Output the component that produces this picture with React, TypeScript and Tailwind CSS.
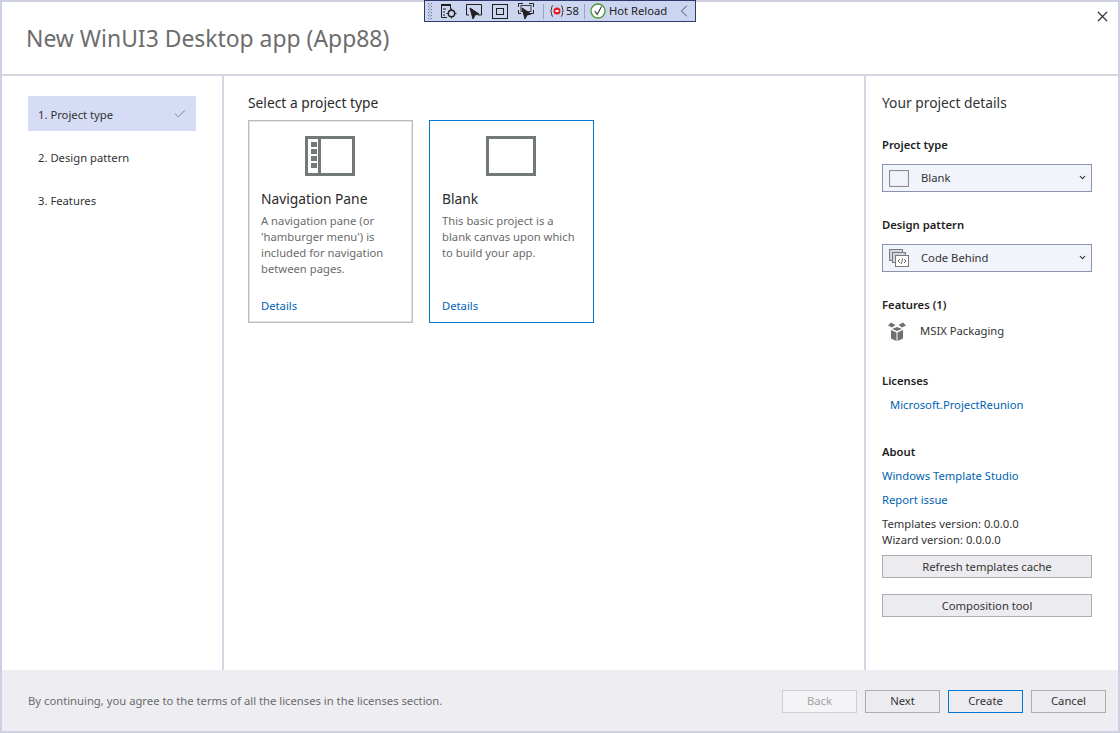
import { X, Check, ChevronDown, ChevronLeft } from 'lucide-react';

const font = "font-['Noto_Sans','Open_Sans',sans-serif]";
const link = 'text-[#0063b1]';

// Segoe-style step in the left rail
function Step({ label, active }: { label: string; active?: boolean }) {
  return (
    <div className={`flex h-[35px] items-center justify-between pl-[10px] pr-[9px] text-[11.25px] text-[#333] ${active ? 'bg-[#d6dcf5]' : ''}`}>
      <span className="pt-[4px]">{label}</span>
      {active && <Check size={14} strokeWidth={1.1} className="text-[#555]" />}
    </div>
  );
}

function Card({ title, lines, selected, children }: { title: string; lines: string[]; selected?: boolean; children: React.ReactNode }) {
  return (
    <div className={`flex h-[203px] w-[165px] flex-col border px-3 ${selected ? 'border-[#0078d4]' : 'border-[#bbbbbb] shadow-[inset_0_0_0_0.5px_#ccc]'}`}>
      <div className="mt-[15px] flex h-[40px] justify-center pr-px">{children}</div>
      <div className="mt-[12px] h-[22px] text-[13.8px] leading-[22px] text-[#2a2a2a]">{title}</div>
      <div className="mt-[3px] text-[11.25px] leading-[16px] text-[#6b6b6b]">
        {lines.map((l) => (
          <div key={l} className="whitespace-nowrap">{l}</div>
        ))}
      </div>
      <div className={`mt-auto mb-[8px] text-[11.25px] leading-[16px] ${link}`}>Details</div>
    </div>
  );
}

function NavIcon() {
  return (
    <svg width="50" height="40" viewBox="0 0 50 40">
      <rect x="1.5" y="1.5" width="47" height="37" fill="none" stroke="#737878" strokeWidth="3" />
      <rect x="13" y="2" width="3" height="36" fill="#737878" />
      <rect x="6" y="6" width="6" height="5" fill="#737878" />
      <rect x="6" y="13" width="6" height="5" fill="#737878" />
      <rect x="6" y="20" width="6" height="5" fill="#737878" />
      <rect x="6" y="27" width="6" height="5" fill="#737878" />
    </svg>
  );
}

function BlankIcon() {
  return (
    <svg width="50" height="40" viewBox="0 0 50 40">
      <rect x="1.5" y="1.5" width="47" height="37" fill="none" stroke="#737878" strokeWidth="3" />
    </svg>
  );
}

function Combo({ label, children }: { label: string; children: React.ReactNode }) {
  return (
    <div className="relative flex h-[28px] items-center border border-[#8a94ad] bg-[#f2f4fc] text-[11.25px] text-[#333]">
      <div className="flex w-[38px] justify-start pl-[6px]">{children}</div>
      <span className="pt-[1px]">{label}</span>
      <ChevronDown size={9} strokeWidth={3} className="absolute right-[4px] top-[8px] text-[#333]" />
    </div>
  );
}

function Heading({ children, className }: { children: React.ReactNode; className?: string }) {
  return <div className={`text-[11.25px] font-semibold leading-[16px] text-[#1e1e1e] ${className ?? ''}`}>{children}</div>;
}

function SideButton({ label, className }: { label: string; className?: string }) {
  return (
    <div className={`flex h-[23px] items-center justify-center border border-[#adadad] bg-[#ececf0] pt-[2px] text-[11.25px] text-[#333] ${className ?? ''}`}>
      {label}
    </div>
  );
}

function FootButton({ label, kind }: { label: string; kind?: 'off' | 'primary' }) {
  const look =
    kind === 'off' ? 'border-[#ccced8] bg-[#f4f4f6] text-[#a2a2a2]' : kind === 'primary' ? 'border-[#0078d4] bg-[#ececf0] text-[#333]' : 'border-[#adadad] bg-[#ececf0] text-[#333]';
  return <div className={`flex h-[23px] w-[75px] items-center justify-center border text-[11.25px] ${look}`}>{label}</div>;
}

// Visual Studio in-app debug toolbar
function DebugBar() {
  return (
    <div className="absolute -top-[2px] left-[422px] flex h-[22px] w-[272px] items-center border border-[#2e3a6e] bg-[#ccd5f0] text-[11.25px] text-[#222]">
      <svg width="7" height="18" viewBox="0 0 7 18" className="ml-[2px] shrink-0">
        {[1, 4, 7, 10, 13, 16].map((y) => (
          <g key={y} fill="#6d7590">
            <rect x="1" y={y} width="1" height="1" />
            <rect x="4" y={y} width="1" height="1" />
            <rect x="2.5" y={y + 1.5} width="1" height="1" />
          </g>
        ))}
      </svg>
      <svg width="18" height="18" viewBox="0 0 18 18" className="ml-[6px] shrink-0" fill="none" stroke="#1f1f1f">
        <path d="M1.5 15.5V2.5h9v5" />
        <rect x="1" y="2" width="10" height="2" fill="#1f1f1f" stroke="none" />
        <path d="M3 7h3M3 10h2M3 13h2M1.5 15.5H7" />
        <circle cx="11.5" cy="11.5" r="3.2" strokeWidth="1.4" />
        <path d="M11.5 6.5v2M11.5 14.5v2M6.5 11.5h2M14.5 11.5h2" />
      </svg>
      <svg width="18" height="18" viewBox="0 0 18 18" className="ml-[7px] shrink-0" fill="none" stroke="#1f1f1f">
        <path d="M4 13H1.5V2.5h15V13H13" />
        <path d="M5 6l9 6-4 1-2 4z" fill="#1f1f1f" />
      </svg>
      <svg width="18" height="18" viewBox="0 0 18 18" className="ml-[8px] shrink-0" fill="none" stroke="#1f1f1f">
        <rect x="1.5" y="2.5" width="15" height="14" />
        <rect x="5.5" y="6.5" width="7" height="6" />
      </svg>
      <svg width="18" height="18" viewBox="0 0 18 18" className="ml-[8px] shrink-0" fill="none" stroke="#1f1f1f">
        <path d="M1.5 5V1.5H6M12 1.5h4.5V5M1.5 8v3.5H4M14 11.5h2.5V8" />
        <rect x="4" y="3.5" width="10" height="6" strokeWidth="0.8" />
        <path d="M5 6l9 6-4 1-2 4z" fill="#1f1f1f" />
      </svg>
      <div className="ml-[8px] h-[15px] w-px shrink-0 bg-[#9aa3c4]" />
      <svg width="14" height="14" viewBox="0 0 14 14" className="ml-[6px] shrink-0" fill="none">
        <path d="M3 1.500C1 1.500 2 6 .8 7c1.200 1 .2 5.500 2.200 5.500M11 1.500c2 0 1 4.500 2.200 5.500-1.200 1-.2 5.500-2.200 5.500" stroke="#333" />
        <circle cx="7" cy="7" r="3.500" fill="#e51c23" />
        <rect x="5.500" y="6" width="3" height="2" fill="#fff" />
      </svg>
      <span className="ml-[2px] whitespace-nowrap">58</span>
      <div className="ml-[5px] h-[15px] w-px shrink-0 bg-[#9aa3c4]" />
      <svg width="16" height="16" viewBox="0 0 16 16" className="ml-[5px] shrink-0" fill="#fff">
        <circle cx="8" cy="8" r="7" stroke="#4a9b34" strokeWidth="1.300" />
        <path d="M4.800 8l2.400 3.500L11.500 3.500" fill="none" stroke="#333" strokeWidth="1.100" />
      </svg>
      <span className="ml-[3px] whitespace-nowrap">Hot Reload</span>
      <ChevronLeft size={20} strokeWidth={1} className="ml-[7px] shrink-0 text-[#333]" />
    </div>
  );
}

export default function App() {
  return (
    <div className={`relative flex h-[733px] w-[1120px] flex-col border-2 border-[#ccd0e0] bg-white ${font}`}>
      <DebugBar />
      <div className="flex h-[74px] shrink-0 items-center border-b-2 border-[#d4d6e2] pl-[24px] pt-[3px]">
        <h1 className="text-[22.9px] text-[#6d6d6d]">New WinUI3 Desktop app (App88)</h1>
        <X size={17} strokeWidth={1.8} className="absolute right-[7px] top-[6px] text-[#3a3a3a]" />
      </div>

      <div className="flex min-h-0 flex-1">
        <div className="flex w-[222px] shrink-0 flex-col gap-[8px] border-r-2 border-[#d4d6e2] pl-[26px] pr-[26px] pt-[20px]">
          <Step label="1. Project type" active />
          <Step label="2. Design pattern" />
          <Step label="3. Features" />
        </div>

        <div className="flex-1 pl-[24px] pt-[16px]">
          <div className="h-[22px] text-[13.8px] leading-[22px] text-[#2a2a2a]">Select a project type</div>
          <div className="mt-[6px] flex gap-[16px]">
            <Card title="Navigation Pane" lines={['A navigation pane (or', "'hamburger menu') is", 'included for navigation', 'between pages.']}>
              <NavIcon />
            </Card>
            <Card title="Blank" selected lines={['This basic project is a', 'blank canvas upon which', 'to build your app.']}>
              <BlankIcon />
            </Card>
          </div>
        </div>

        <div className="flex w-[254px] shrink-0 flex-col border-l-2 border-[#d4d6e2] pl-[16px] pr-[26px] pt-[16px]">
          <div className="h-[22px] text-[13.8px] leading-[22px] text-[#333]">Your project details</div>
          <Heading className="mt-[23px]">Project type</Heading>
          <div className="mt-[11px]">
            <Combo label="Blank">
              <svg width="20" height="17" viewBox="0 0 20 17">
                <rect x="0.500" y="0.500" width="19" height="16" fill="none" stroke="#8d8d8d" strokeWidth="1.200" />
              </svg>
            </Combo>
          </div>
          <Heading className="mt-[25px]">Design pattern</Heading>
          <div className="mt-[11px]">
            <Combo label="Code Behind">
              <svg width="20" height="18" viewBox="0 0 20 18" fill="#f2f4fc" stroke="#7b7b7b">
                <rect x="0.500" y="0.500" width="13" height="11" fill="#d3d5dc" />
                <rect x="3.500" y="3.500" width="13" height="10" fill="#d3d5dc" />
                <rect x="6.500" y="6.500" width="13" height="11" fill="#fff" />
                <path d="M11 10l-2 2 2 2M15 10l2 2-2 2M13.800 9.500l-1.600 5.500" fill="none" strokeWidth="0.800" stroke="#444" />
              </svg>
            </Combo>
          </div>
          <Heading className="mt-[25px]">Features (1)</Heading>
          <div className="mt-[6px] flex h-[24px] items-center text-[11.25px] text-[#333]">
            <svg width="18" height="19" viewBox="0 0 18 19" className="ml-[6px]" fill="#6c7072">
              <path d="M3 8l5.500 2.500V19L3 16.500zM15 8l-5.500 2.500V19l5.500-2.500z" />
              <path d="M0 3.500L3 .5 7.500 3 4 5.500zM18 3.500L15 .5 10.500 3 14 5.500z" />
              <path d="M4 7l5-2 5 2-5 2z" />
            </svg>
            <span className="ml-[14px]">MSIX Packaging</span>
          </div>
          <Heading className="mt-[30px]">Licenses</Heading>
          <div className={`mt-[8px] pl-[8px] text-[11.25px] leading-[16px] ${link}`}>Microsoft.ProjectReunion</div>
          <Heading className="mt-[31px]">About</Heading>
          <div className={`mt-[8px] text-[11.25px] leading-[16px] ${link}`}>Windows Template Studio</div>
          <div className={`mt-[8px] text-[11.25px] leading-[16px] ${link}`}>Report issue</div>
          <div className="mt-[8px] text-[11.25px] leading-[16px] text-[#333]">Templates version: 0.0.0.0</div>
          <div className="text-[11.25px] leading-[16px] text-[#333]">Wizard version: 0.0.0.0</div>
          <SideButton label="Refresh templates cache" className="mt-[7px]" />
          <SideButton label="Composition tool" className="mt-[16px]" />
        </div>
      </div>

      <div className="flex h-[61px] shrink-0 items-center justify-between bg-[#eeeef2] pl-[26px] pr-[12px] pt-[1px]">
        <span className="text-[11.25px] text-[#6b6b6b]">By continuing, you agree to the terms of all the licenses in the licenses section.</span>
        <div className="flex gap-[8px]">
          <FootButton label="Back" kind="off" />
          <FootButton label="Next" />
          <FootButton label="Create" kind="primary" />
          <FootButton label="Cancel" />
        </div>
      </div>
    </div>
  );
}
